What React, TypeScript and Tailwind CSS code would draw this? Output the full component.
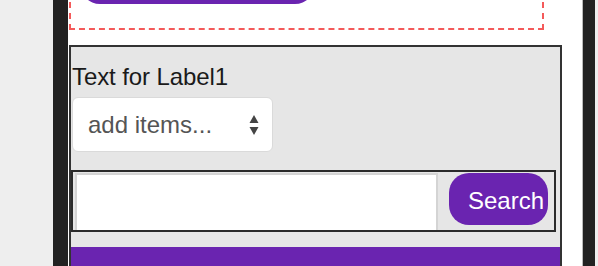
import React from 'react';

const font = { fontFamily: '"Liberation Sans", Arial, Helvetica, sans-serif' };

function SelectArrows() {
  return (
    <svg width="10" height="22" viewBox="0 0 10 22" className="shrink-0">
      <path d="M5 1 L9.5 9 L0.5 9 Z" fill="#444" />
      <path d="M5 21 L9.5 13 L0.5 13 Z" fill="#444" />
    </svg>
  );
}

export default function App() {
  return (
    <div className="w-[598px] h-[266px] overflow-hidden flex bg-[#eeeeee]" style={font}>
      <div className="w-[53px] shrink-0" />
      <div className="w-[15px] shrink-0 bg-[#222222]" />

      <div className="w-[514px] shrink-0 bg-white flex flex-col">
        {/* previous component, cropped at top */}
        <div className="ml-[1px] mt-[-20px] w-[475px] h-[50px] shrink-0 border-2 border-dashed border-[#f45a5a]">
          <div className="ml-[9px] mt-[-18px] w-[235px] h-[40px] rounded-[20px] bg-[#6a24b0]" />
        </div>

        <div className="ml-[1px] mt-[15px] w-[493px] h-[300px] shrink-0 border-2 border-[#333333] bg-[#e6e6e6] flex flex-col pt-[17px]">
          <div className="pl-[1px] text-[24px] leading-[26px] tracking-[-0.1px] text-[#1a1a1a]">Text for Label1</div>

          <div className="ml-[1px] mt-[7px] w-[201px] h-[55px] shrink-0 rounded-[6px] bg-white border border-[#dadada] flex items-center justify-between pl-[15px] pr-[13px]">
            <span className="text-[24px] text-[#555555]">add items...</span>
            <SelectArrows />
          </div>

          <div className="mt-[18px] w-[485px] h-[62px] shrink-0 border-2 border-[#2a2a2a] flex items-start">
            <div className="ml-[2px] mt-[1px] w-[363px] h-[57px] bg-white border-2 border-[#d4d4d4] border-b-0" />
            <button className="ml-[11px] mt-[1px] w-[99px] h-[52px] rounded-[20px] bg-[#6a24b0] text-white text-[24px] text-left pl-[19px] pt-[3px] whitespace-nowrap overflow-visible">
              Search
            </button>
          </div>

          <div className="mt-[15px] h-[40px] shrink-0 bg-[#6a24b0]" />
        </div>
      </div>

      <div className="w-[13px] shrink-0 bg-[#222222] border-l border-[#bbbbbb]" />
    </div>
  );
}
